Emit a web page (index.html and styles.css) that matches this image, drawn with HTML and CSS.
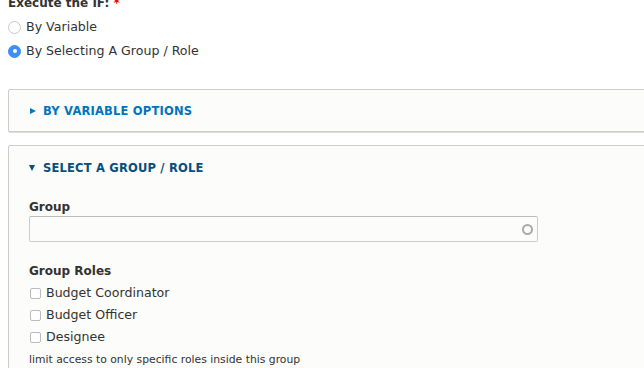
FILE: index.html
```html
<!DOCTYPE html>
<html>
<head>
<meta charset="utf-8">
<link rel="stylesheet" href="styles.css">
</head>
<body>
<div class="page">
  <div class="form-item">
    <div class="label">Execute the IF: <span class="req">*</span></div>
    <div class="radios">
      <label class="opt"><span class="radio"></span>By Variable</label>
      <label class="opt"><span class="radio checked"></span>By Selecting A Group / Role</label>
    </div>
  </div>

  <section class="fieldset collapsed">
    <div class="legend"><span class="tri"></span>BY VARIABLE OPTIONS</div>
  </section>

  <section class="fieldset open">
    <div class="legend"><span class="tri down"></span>SELECT A GROUP / ROLE</div>
    <div class="body">
      <div class="field">
        <div class="label">Group</div>
        <div class="input"><span class="throbber"></span></div>
      </div>
      <div class="field roles">
        <div class="label">Group Roles</div>
        <label class="opt cb"><span class="box"></span>Budget Coordinator</label>
        <label class="opt cb"><span class="box"></span>Budget Officer</label>
        <label class="opt cb"><span class="box"></span>Designee</label>
        <div class="desc">limit access to only specific roles inside this group</div>
      </div>
    </div>
  </section>
</div>
</body>
</html>
```
FILE: styles.css
```css
html, body { margin: 0; padding: 0; background: #fff; }
body {
  font-family: "DejaVu Sans", "Open Sans", sans-serif;
  font-size: 12.6px;
  color: #333;
  overflow: hidden;
}
.page { padding: 0 0 0 8px; margin-top: -6px; width: 700px; }
.label { font-weight: bold; color: #333; font-size: 12px; line-height: 18px; }
.req { color: #e00; }
.radios { display: flex; flex-direction: column; gap: 6px; margin-top: 6px; }
.opt { display: flex; align-items: center; line-height: 18px; color: #333; }
.radio {
  width: 13px; height: 13px; border-radius: 50%;
  border: 1px solid #c8c8c8; background: #fff;
  margin-right: 5px; box-sizing: border-box;
}
.radio.checked { background: #3b8ef5; border-color: #3b8ef5; position: relative; }
.radio.checked::after {
  content: ""; position: absolute; left: 3.5px; top: 3.5px;
  width: 4px; height: 4px; border-radius: 50%; background: #fff;
}
.fieldset {
  border: 1px solid #ccc;
  border-radius: 2px;
  background: #fcfcfa;
  box-shadow: 0 1px 0 #ddd;
}
.collapsed { margin-top: 29px; height: 43px; box-sizing: border-box; }
.open { margin-top: 13px; }
.legend {
  display: flex; align-items: center;
  padding: 12px 0 0 20px;
  font-weight: bold; font-size: 11.5px; letter-spacing: 0.2px;
  line-height: 18px;
}
.open .legend { padding-top: 13px; }
.collapsed .legend { color: #0074bd; }
.open .legend { color: #064e80; }
.tri {
  width: 0; height: 0; margin: 0 7px 0 1px;
  border-top: 3.5px solid transparent; border-bottom: 3.5px solid transparent;
  border-left: 6px solid #0074bd;
}
.tri.down {
  margin: 0 8px 0 0;
  border-left: 3.5px solid transparent; border-right: 3.5px solid transparent;
  border-top: 6px solid #064e80; border-bottom: 0;
}
.body { padding: 21px 0 0 20px; }
.input {
  width: 509px; height: 26px; box-sizing: border-box;
  border: 1px solid #ccc; border-radius: 2px;
  border-top-color: #bbb;
  background: #fcfcfa;
  display: flex; align-items: center; justify-content: flex-end;
  padding-right: 4px;
}
.throbber {
  width: 11px; height: 11px; border-radius: 50%;
  border: 2px solid #aaa; box-sizing: border-box;
}
.roles { margin-top: 20px; }
.cb { margin-top: 4px; }
.box {
  width: 11px; height: 11px; box-sizing: border-box;
  border: 1px solid #bbb; border-radius: 2px; background: #fff;
  margin-right: 5px; margin-left: 1px;
}
.desc { font-size: 10.8px; margin-top: 6px; color: #333; line-height: 16px; }
```
